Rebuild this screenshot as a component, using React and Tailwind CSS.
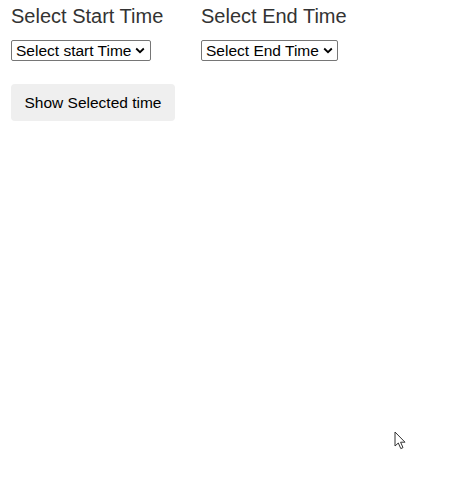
import React from "react";

function Chevron() {
  return (
    <svg width="10" height="7" viewBox="0 0 10 7" className="ml-[4px] shrink-0">
      <path d="M1.2 1.5 L5 5.2 L8.8 1.5" fill="none" stroke="#000" strokeWidth="1.8" />
    </svg>
  );
}

function FakeSelect({ label, width }) {
  return (
    <div
      className={`mt-[12px] h-[21px] ${width} flex items-center border border-[#767676] rounded-[2px] bg-white pl-[4px] pr-[3px] text-[15.5px] leading-none text-black`}
    >
      <span className="whitespace-nowrap">{label}</span>
      <Chevron />
    </div>
  );
}

export default function App() {
  return (
    <div
      className="relative w-[474px] h-[489px] bg-white overflow-hidden pl-[11px] pt-[5px]"
      style={{ fontFamily: '"Liberation Sans", Arial, sans-serif' }}
    >
      <div className="flex">
        <div className="w-[190px]">
          <div className="text-[20px] leading-[23px] text-[#333]">Select Start Time</div>
          <FakeSelect label="Select start Time" width="w-[140px]" />
        </div>
        <div>
          <div className="text-[20px] leading-[23px] text-[#333]">Select End Time</div>
          <FakeSelect label="Select End Time" width="w-[137px]" />
        </div>
      </div>
      <button className="mt-[23px] h-[37px] w-[164px] rounded-[4px] bg-[#efefef] text-[15.5px] text-black">
        Show Selected time
      </button>
      <svg
        className="absolute left-[394px] top-[431px]"
        width="13"
        height="20"
        viewBox="0 0 13 20"
      >
        <path
          d="M1 1 L1 15 L4.3 12 L6.8 17.6 L9 16.6 L6.6 11.2 L11 11.2 Z"
          fill="#fff"
          stroke="#333"
          strokeWidth="1"
          strokeLinejoin="round"
        />
      </svg>
    </div>
  );
}
